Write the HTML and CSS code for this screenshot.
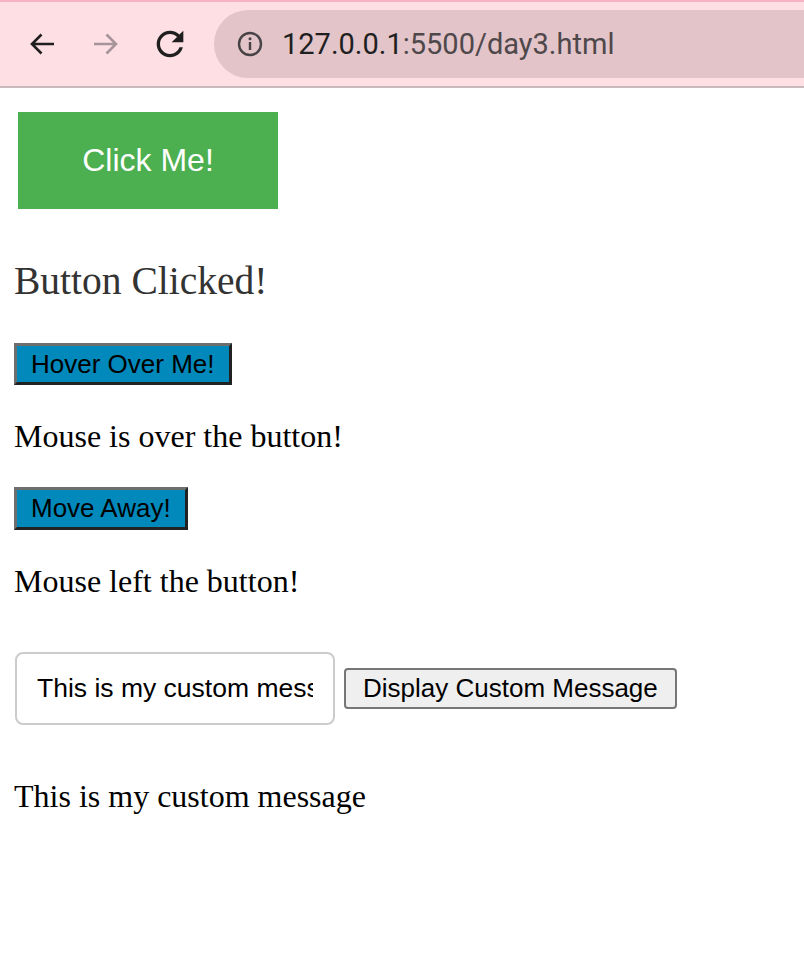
FILE: index.html
```html
<!DOCTYPE html>
<html lang="en">
<head>
  <meta charset="UTF-8">
  <meta name="viewport" content="width=device-width, initial-scale=1">
  <title>Day 3 - Events</title>
  <link rel="stylesheet" href="styles.css">
</head>
<body>
  <!-- Browser toolbar -->
  <div class="toolbar">
    <span class="nav-icon">
      <svg width="26" height="24" viewBox="0 0 26 24"><path d="M25 12H3M12.5 2.5L3 12l9.5 9.5" fill="none" stroke="#1f1f1f" stroke-width="2.6"/></svg>
    </span>
    <span class="nav-icon">
      <svg width="26" height="24" viewBox="0 0 26 24"><path d="M1 12h22M13.5 2.5L23 12l-9.5 9.5" fill="none" stroke="#a7949a" stroke-width="2.6"/></svg>
    </span>
    <span class="nav-icon">
      <svg width="40" height="40" viewBox="0 0 24 24"><path d="M17.65 6.35C16.2 4.9 14.21 4 12 4c-4.42 0-7.99 3.58-7.99 8s3.57 8 7.99 8c3.73 0 6.84-2.55 7.73-6h-2.08c-.82 2.33-3.04 4-5.65 4-3.31 0-6-2.69-6-6s2.69-6 6-6c1.66 0 3.14.69 4.22 1.78L13 11h7V4l-2.35 2.35z" fill="#1f1f1f"/></svg>
    </span>
    <div class="address">
      <svg class="info" width="26" height="26" viewBox="0 0 26 26">
        <circle cx="13" cy="13" r="11" fill="none" stroke="#474245" stroke-width="2.4"/>
        <rect x="11.8" y="11" width="2.4" height="8" fill="#474245"/>
        <circle cx="13" cy="7.8" r="1.5" fill="#474245"/>
      </svg>
      <span class="url"><span class="host">127.0.0.1</span>:5500/day3.html</span>
    </div>
  </div>

  <div class="page">
    <button class="click-btn">Click Me!</button>
    <h2 class="result">Button Clicked!</h2>

    <button class="blue-btn">Hover Over Me!</button>
    <p class="msg">Mouse is over the button!</p>

    <button class="blue-btn">Move Away!</button>
    <p class="msg">Mouse left the button!</p>

    <div class="custom-row">
      <input type="text" class="custom-input" value="This is my custom message">
      <button class="custom-btn">Display Custom Message</button>
    </div>
    <p class="msg custom-msg">This is my custom message</p>
  </div>
</body>
</html>
```

FILE: styles.css
```css
/* Global */
body {
  margin: 0;
  background: #fff;
  font-family: "Liberation Serif", "Times New Roman", serif;
  color: #000;
}
/* Browser toolbar */
.toolbar {
  display: flex;
  align-items: center;
  height: 84px;
  padding-left: 22px;
  background: #fddfe4;
  border-top: 2px solid #f7b3c1;
  border-bottom: 2px solid #cbbabd;
  overflow: hidden;
}
.nav-icon {
  width: 40px;
  height: 40px;
  margin-right: 24px;
  display: flex;
  align-items: center;
  justify-content: center;
}
.address {
  flex: 1;
  height: 68px;
  display: flex;
  align-items: center;
  padding-left: 23px;
  background: #e2c4c9;
  border-radius: 34px 0 0 34px;
}
.info {
  margin-right: 19px;
}
.url {
  font-family: Roboto, "Liberation Sans", sans-serif;
  font-size: 29px;
  color: #4f484b;
  white-space: nowrap;
}
.url .host {
  color: #1f1f1f;
}
/* Page content */
.page {
  padding: 0 14px;
}
.click-btn {
  display: block;
  width: 260px;
  height: 97px;
  margin: 24px 0 0 4px;
  border: none;
  background: #4caf50;
  color: #fff;
  font-family: "Liberation Sans", Arial, sans-serif;
  font-size: 32px;
  cursor: pointer;
}
.result {
  margin: 50px 0 0;
  font-size: 39.5px;
  line-height: 44px;
  font-weight: normal;
  color: #333;
}
.blue-btn {
  display: block;
  height: 42px;
  margin-top: 40px;
  padding: 0 14px;
  background: #0089ba;
  color: #000;
  border: 3px solid;
  border-color: #6e6e6e #222 #222 #6e6e6e;
  font-family: "Liberation Sans", Arial, sans-serif;
  font-size: 26px;
}
.msg + .blue-btn {
  margin-top: 33px;
  height: 43px;
}
.msg {
  margin: 33px 0 0;
  font-size: 32px;
  line-height: 36px;
}
.custom-row {
  display: flex;
  align-items: center;
  margin: 53px 0 0 1px;
}
.custom-input {
  box-sizing: border-box;
  width: 320px;
  height: 73px;
  padding: 0 20px;
  border: 2px solid #ccc;
  border-radius: 8px;
  font-family: "Liberation Sans", Arial, sans-serif;
  font-size: 26.5px;
  color: #000;
  outline: none;
}
.custom-btn {
  height: 41px;
  margin-left: 9px;
  padding: 0 17px;
  background: #efefef;
  border: 2px solid #767676;
  border-radius: 4px;
  font-family: "Liberation Sans", Arial, sans-serif;
  font-size: 26px;
  color: #000;
}
.custom-msg {
  margin-top: 53px;
}
```
